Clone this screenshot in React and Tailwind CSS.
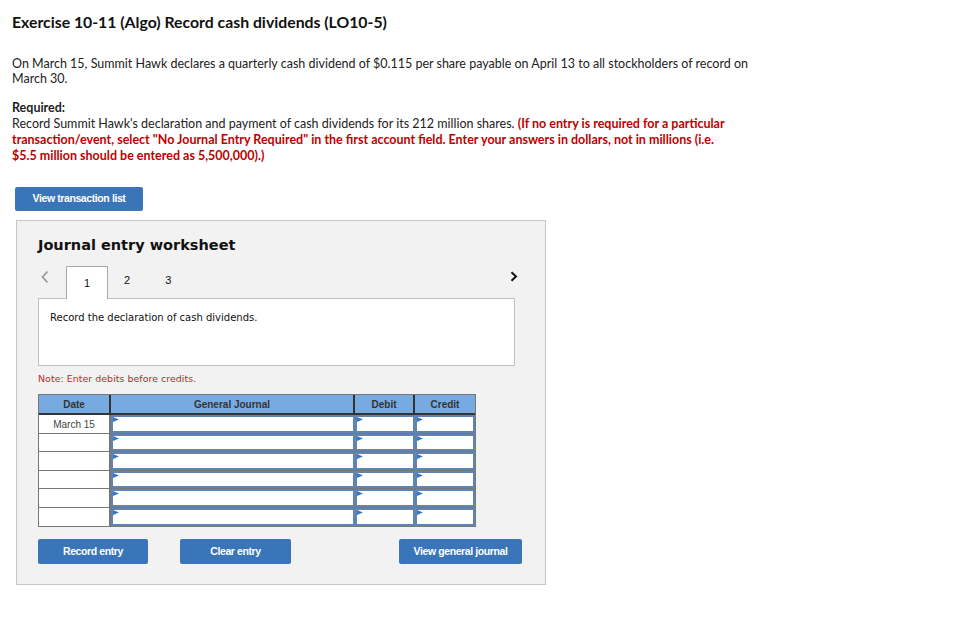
import React from "react";

const Flag = () => (
  <svg className="absolute left-0 top-0" width="6" height="6" viewBox="0 0 6 6">
    <polygon points="0,0 6,2.5 0,5" fill="#3b78c2" />
  </svg>
);

const InputCell = ({ w }) => (
  <div className={`relative h-full bg-white border-2 border-[#5f85b5] ${w}`}>
    <Flag />
  </div>
);

export default function App() {
  const rows = ["March 15", "", "", "", "", ""];
  return (
    <div className="min-h-[637px] w-[961px] bg-white text-[#222]" style={{ fontFamily: "Lato, 'Open Sans', sans-serif" }}>
      <div className="px-[12px] pt-[13px]">
        <h1 className="text-[15.8px] font-bold leading-[18px] text-[#111]">
          Exercise 10-11 (Algo) Record cash dividends (LO10-5)
        </h1>
        <p className="mt-[25px] text-[12.5px] leading-[15px] text-[#222]">
          On March 15, Summit Hawk declares a quarterly cash dividend of $0.115 per share payable on April 13 to all stockholders of record on
          <br />
          March 30.
        </p>
        <p className="mt-[14px] text-[12.5px] leading-[16px]">
          <span className="font-bold">Required:</span>
          <br />
          Record Summit Hawk's declaration and payment of cash dividends for its 212 million shares.{" "}
          <span className="font-bold text-[#c00000]">
            (If no entry is required for a particular
            <br />
            transaction/event, select "No Journal Entry Required" in the first account field. Enter your answers in dollars, not in millions (i.e.
            <br />
            $5.5 million should be entered as 5,500,000).)
          </span>
        </p>
      </div>

      <div className="ml-[15px] mt-[23px]">
        <button className="flex h-[24px] w-[128px] items-center justify-center rounded-[2px] bg-[#3a75ba] text-[10.5px] font-bold tracking-[-0.4px] text-white" style={{ fontFamily: "'Liberation Sans', Arial, sans-serif" }}>
          View transaction list
        </button>
      </div>

      <div className="ml-[16px] mt-[9px] h-[365px] w-[530px] border border-[#c6c6c6] bg-[#f2f2f2] pl-[21px] pt-[15px]">
        <h2 className="text-[14.5px] font-bold leading-[18px] text-[#111]" style={{ fontFamily: "'DejaVu Sans', Verdana, sans-serif" }}>
          Journal entry worksheet
        </h2>

        <div className="mt-[12px] flex h-[32px] w-[477px] items-start" style={{ fontFamily: "'Liberation Sans', Arial, sans-serif" }}>
          <svg className="ml-[3px] mt-[4px]" width="8" height="14" viewBox="0 0 8 14">
            <polyline points="6.5,1.5 1.5,7 6.5,12.5" fill="none" stroke="#9a9a9a" strokeWidth="1.8" />
          </svg>
          <div className="relative z-10 ml-[17px] flex h-[33px] w-[42px] items-center justify-center border border-b-0 border-[#aaa] bg-white text-[11px] text-[#111]">
            1
          </div>
          <span className="mt-[6px] ml-[16px] text-[11px] text-[#111]">2</span>
          <span className="mt-[6px] ml-[35px] text-[11px] text-[#111]">3</span>
          <svg className="ml-auto mr-[-3px] mt-[5px]" width="8" height="11" viewBox="0 0 8 11">
            <polyline points="1.5,1.2 6,5.5 1.5,9.8" fill="none" stroke="#111" strokeWidth="2" />
          </svg>
        </div>

        <div className="h-[68px] w-[477px] border border-[#c0c0c0] bg-white px-[11px] pt-[11px] text-[10px] text-[#111]" style={{ fontFamily: "'DejaVu Sans', Verdana, sans-serif" }}>
          Record the declaration of cash dividends.
        </div>

        <p className="mt-[6px] text-[9.5px] text-[#c0282b]" style={{ fontFamily: "'DejaVu Sans', Verdana, sans-serif" }}>
          Note: Enter debits before credits.
        </p>

        <div className="mt-[8px] w-[438px] border border-[#777] text-[10px]" style={{ fontFamily: "'Liberation Sans', Arial, sans-serif" }}>
          <div className="flex h-[20px] border-b-2 border-[#333] bg-[#78aae2] font-bold text-[#333]">
            <div className="flex w-[72px] items-center justify-center border-r-2 border-[#333]">Date</div>
            <div className="flex w-[244px] items-center justify-center border-r-2 border-[#333]">General Journal</div>
            <div className="flex w-[60px] items-center justify-center border-r-2 border-[#333]">Debit</div>
            <div className="flex flex-1 items-center justify-center">Credit</div>
          </div>
          {rows.map((d, i) => (
            <div key={i} className={`flex h-[18.5px] ${i < rows.length - 1 ? "border-b border-[#777]" : ""}`}>
              <div className="flex w-[72px] items-center justify-center border-r-2 border-[#777] bg-white text-[#444]">{d}</div>
              <InputCell w="w-[244px]" />
              <InputCell w="w-[60px]" />
              <InputCell w="flex-1" />
            </div>
          ))}
        </div>

        <div className="mt-[12px] flex w-[484px] items-center text-[10.5px] font-bold tracking-[-0.4px] text-white" style={{ fontFamily: "'Liberation Sans', Arial, sans-serif" }}>
          <button className="flex h-[25px] w-[110px] items-center justify-center rounded-[2px] bg-[#3a75ba]">Record entry</button>
          <button className="ml-[32px] flex h-[25px] w-[111px] items-center justify-center rounded-[2px] bg-[#3a75ba]">Clear entry</button>
          <button className="ml-auto flex h-[25px] w-[123px] items-center justify-center rounded-[2px] bg-[#3a75ba]">View general journal</button>
        </div>
      </div>
    </div>
  );
}
